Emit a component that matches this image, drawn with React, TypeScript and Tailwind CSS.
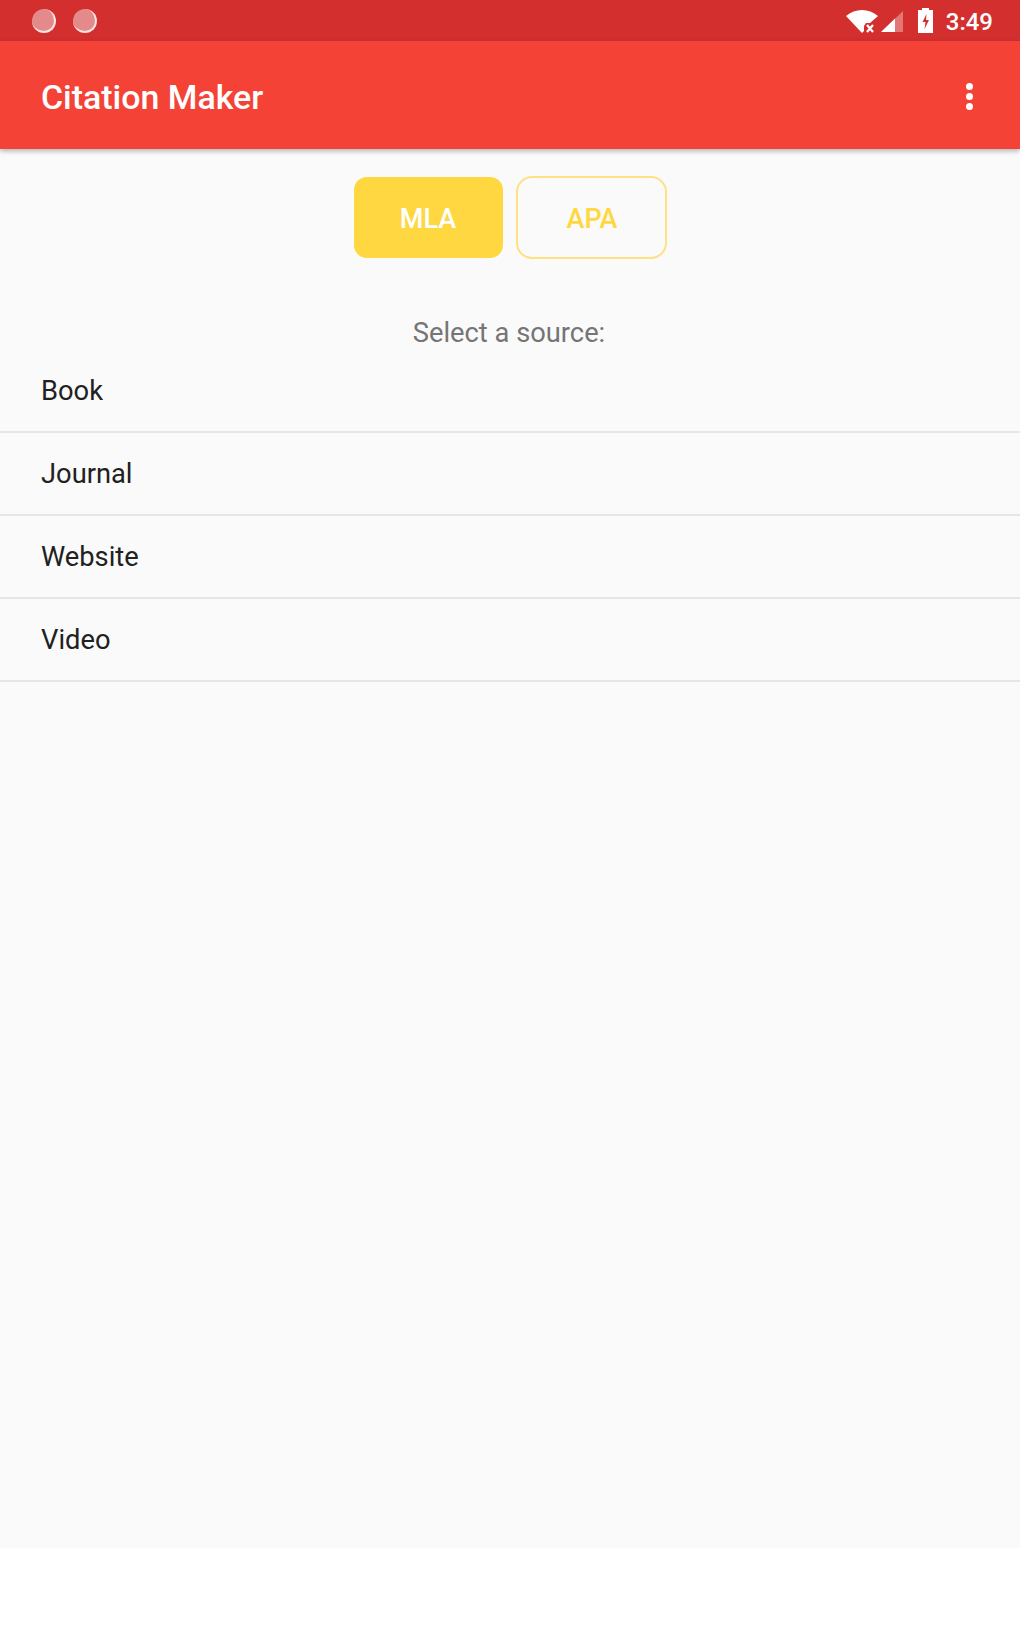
const font = { fontFamily: "Roboto, sans-serif" };

function StatusIcons() {
  return (
    <div className="flex items-center">
      <svg width="32" height="24" viewBox="0 0 32 24" className="ml-[1px]">
        <path d="M0 7 C9 -1 23 -1 32 7 L24 14 L20 14 L18 17 L18 22 L16 24 Z" fill="#fff" />
        <path d="M21 16 L27 23 M27 16 L21 23" stroke="#fff" strokeWidth="2.2" />
      </svg>
      <svg width="24" height="24" viewBox="0 0 24 24" className="ml-[2px]">
        <path d="M1 23 L23 2 L23 23 Z" fill="#fff" fillOpacity="0.35" />
        <path d="M1 23 L15 9.6 L15 23 Z" fill="#fff" />
      </svg>
      <svg width="17" height="26" viewBox="0 0 17 26" className="ml-[13px]">
        <path d="M5 0 H12 V2 H16 V25 H1 V2 H5 Z" fill="#fff" />
        <path d="M9.5 6 L5.5 14 H8.5 L7.5 21 L12 12 H9 Z" fill="#d32f2f" />
      </svg>
    </div>
  );
}

export default function App() {
  const rows = ["Book", "Journal", "Website", "Video"];
  return (
    <div className="w-[1020px] h-[1632px] bg-white" style={font}>
      <div className="h-[1548px] bg-[#fafafa] flex flex-col">
        <div className="h-[41px] bg-[#d32f2f] flex items-center justify-between pl-[32px] pr-[27px]">
          <div className="flex gap-[17px]">
            <div className="w-[24px] h-[24px] rounded-full bg-[#e58a8a] border-b-2 border-r-2 border-[#fbe4e4]" />
            <div className="w-[24px] h-[24px] rounded-full bg-[#e58a8a] border-b-2 border-r-2 border-[#fbe4e4]" />
          </div>
          <div className="flex items-center gap-[12px]">
            <StatusIcons />
            <span className="text-white text-[24px] font-medium leading-none pt-[2px]">3:49</span>
          </div>
        </div>
        <div className="h-[108px] bg-[#f44336] flex items-center justify-between pl-[41px] pr-[47px] shadow-[0_2px_5px_rgba(0,0,0,0.3)] z-10">
          <span className="text-white text-[33.9px] font-medium leading-none pt-[6px]">Citation Maker</span>
          <div className="flex flex-col gap-[3px] pt-[2px]">
            <div className="w-[7px] h-[7px] rounded-full bg-white" />
            <div className="w-[7px] h-[7px] rounded-full bg-white" />
            <div className="w-[7px] h-[7px] rounded-full bg-white" />
          </div>
        </div>
        <div className="flex justify-center items-center gap-[13px] mt-[27px] h-[83px]">
          <div className="w-[149px] h-[81px] rounded-[13px] bg-[#ffd740] flex items-center justify-center text-white text-[27px] font-medium pt-[4px]">MLA</div>
          <div className="w-[151px] h-[83px] rounded-[16px] border-2 border-[#ffe082] flex items-center justify-center text-[#ffd740] text-[27px] font-medium pt-[4px] pl-[2px]">APA</div>
        </div>
        <div className="mt-[55px] h-[36px] flex items-center justify-center text-[#757575] text-[27.3px] pr-[2px] pt-[2px]">Select a source:</div>
        <div className="flex flex-col">
          {rows.map((r) => (
            <div key={r} className="h-[83px] border-b-2 border-[#e6e6e6] pl-[41px] flex items-center text-[#212121] text-[27.3px] pt-[2px]">
              {r}
            </div>
          ))}
        </div>
      </div>
    </div>
  );
}
